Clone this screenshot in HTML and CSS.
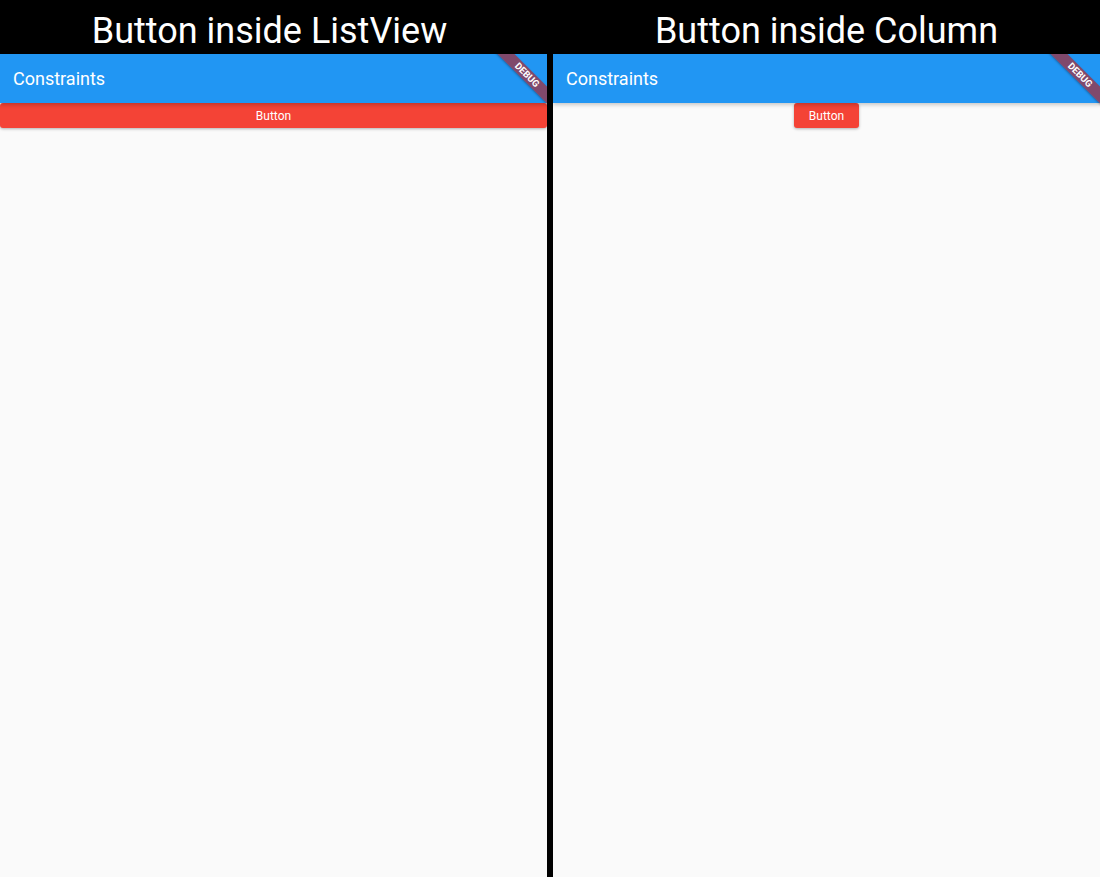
FILE: index.html
```html
<!DOCTYPE html>
<html lang="en">
<head>
  <meta charset="UTF-8">
  <title>Button constraints</title>
  <link rel="stylesheet" href="styles.css">
</head>
<body>
  <div class="compare">
    <div class="pane">
      <h1 class="pane-title pane-title-left">Button inside ListView</h1>
      <div class="screen">
        <div class="app-bar">Constraints</div>
        <div class="debug-banner">DEBUG</div>
        <div class="list-view">
          <button class="btn btn-stretch">Button</button>
        </div>
      </div>
    </div>

    <div class="pane">
      <h1 class="pane-title">Button inside Column</h1>
      <div class="screen">
        <div class="app-bar">Constraints</div>
        <div class="debug-banner">DEBUG</div>
        <div class="column">
          <button class="btn">Button</button>
        </div>
      </div>
    </div>
  </div>
</body>
</html>
```

FILE: styles.css
```css
body {
  margin: 0;
  background: #000;
  font-family: Roboto, "Liberation Sans", sans-serif;
}
.compare {
  display: grid;
  grid-template-columns: 547px 547px;
  column-gap: 6px;
  height: 877px;
}
.pane {
  display: flex;
  flex-direction: column;
}
.pane-title {
  margin: 0;
  height: 54px;
  line-height: 62px;
  color: #fff;
  font-size: 36px;
  font-weight: 400;
  text-align: center;
}
.pane-title-left {
  padding-right: 8px;
}
.screen {
  position: relative;
  flex: 1;
  background: #fafafa;
  overflow: hidden;
}
.app-bar {
  position: relative;
  z-index: 1;
  height: 49px;
  padding-left: 13px;
  line-height: 49px;
  background: #2196f3;
  color: #fff;
  font-size: 18px;
  box-shadow: 0 2px 4px rgba(0,0,0,0.2);
}
.debug-banner {
  position: absolute;
  z-index: 2;
  top: 15px;
  right: -30px;
  width: 100px;
  height: 12px;
  line-height: 12px;
  background: rgba(183,28,28,0.63);
  color: #fff;
  font-size: 9.5px;
  font-weight: bold;
  text-align: center;
  transform: rotate(45deg);
  box-shadow: 0 1px 2px rgba(0,0,0,0.25);
}
.list-view, .column {
  display: flex;
  flex-direction: column;
}
.column {
  align-items: center;
}
.btn {
  height: 25px;
  padding: 0 15px;
  border: none;
  border-radius: 3px;
  background: #f44336;
  color: #fff;
  font-family: inherit;
  font-size: 12px;
  font-weight: 400;
  box-shadow: 0 1px 3px rgba(0,0,0,0.3);
}
.btn-stretch {
  width: 100%;
}
```
